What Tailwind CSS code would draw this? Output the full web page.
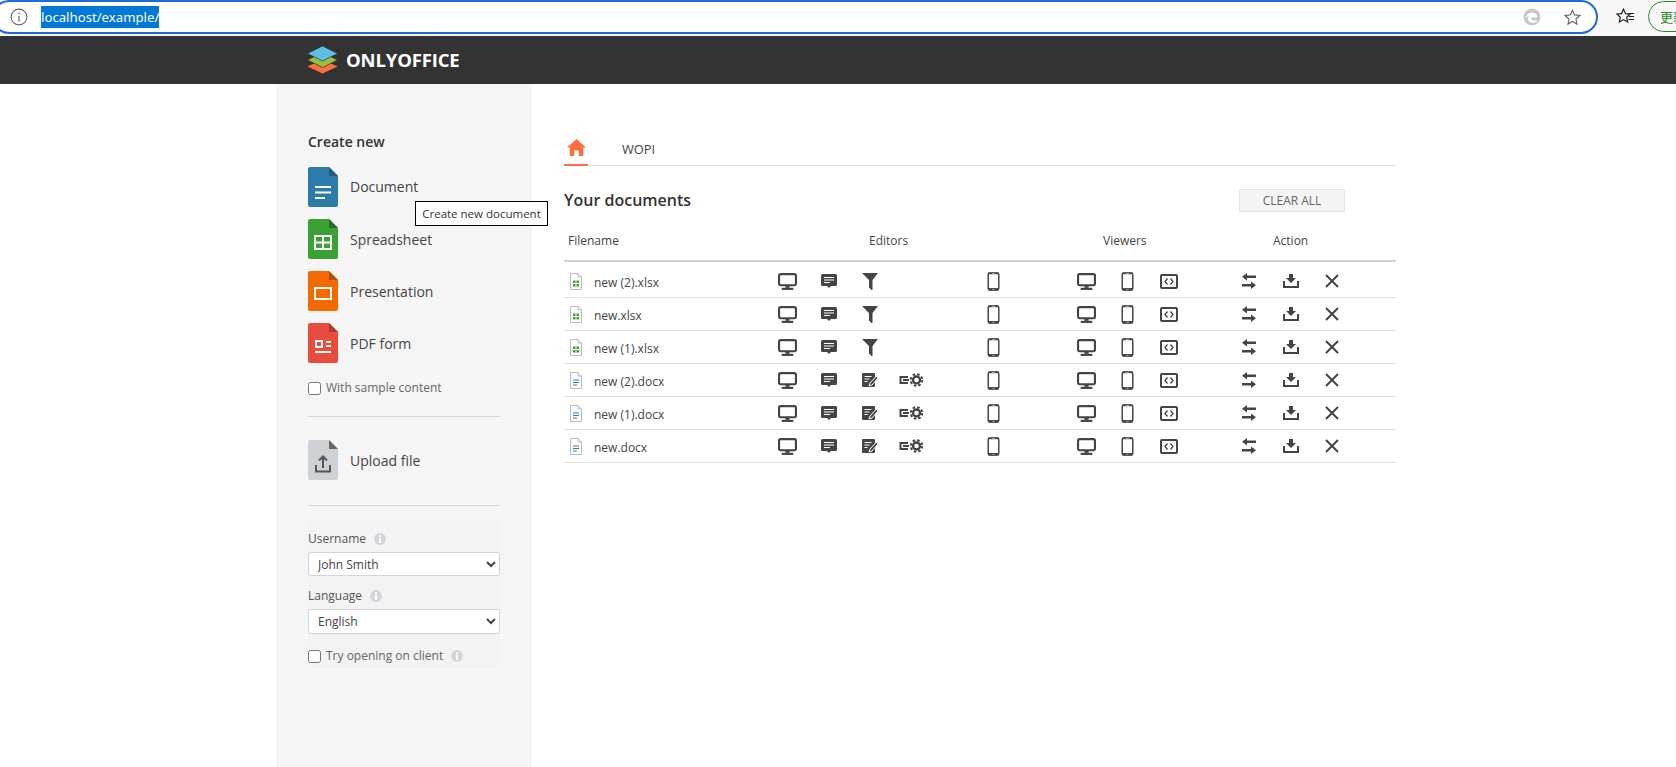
<!DOCTYPE html>
<html lang="en">
<head>
    <meta charset="UTF-8">
    <meta name="viewport" content="width=device-width, initial-scale=1.0">
    <title>ONLYOFFICE Document Editors</title>
    <script src="https://cdn.jsdelivr.net/npm/@tailwindcss/browser@4"></script>
</head>
<body class="h-[767px] overflow-hidden bg-white font-['Open_Sans',sans-serif] text-[#444]">

    <!-- icon sprite -->
    <svg width="0" height="0" class="absolute">
        <symbol id="i-monitor" viewBox="0 0 18 16">
            <rect x="1" y="1" width="16" height="10.500" rx="1.500" fill="none" stroke="#444" stroke-width="2"/>
            <rect x="7" y="12" width="4" height="2" fill="#444"/>
            <rect x="3.500" y="14" width="11" height="2" fill="#444"/>
        </symbol>
        <symbol id="i-comment" viewBox="0 0 16 14">
            <path d="M1.500 0h13A1.500 1.500 0 0 1 16 1.500v9a1.500 1.500 0 0 1-1.500 1.500H10l-2 2-2-2H1.500A1.500 1.500 0 0 1 0 10.500v-9A1.500 1.500 0 0 1 1.500 0z" fill="#444"/>
            <path d="M3 3.500h10M3 6h10M3 8.500h6" stroke="#fff" stroke-width="1.100"/>
        </symbol>
        <symbol id="i-filter" viewBox="0 0 16 17">
            <path d="M0 0h16l-5.500 7v10l-1 0-2.500-2.500V7z" fill="#444"/>
        </symbol>
        <symbol id="i-mobile" viewBox="0 0 12 18">
            <rect x="1" y="1" width="10" height="16" rx="1.500" fill="none" stroke="#444" stroke-width="1.400"/>
            <rect x="1" y="0.500" width="10" height="1.600" fill="#444"/>
            <rect x="1" y="15.200" width="10" height="2.300" fill="#444"/>
            <rect x="4.500" y="1" width="3" height="0.700" fill="#bbb"/>
            <rect x="5" y="16" width="2" height="0.800" fill="#bbb"/>
        </symbol>
        <symbol id="i-embed" viewBox="0 0 18 15">
            <rect x="1" y="1" width="16" height="13" rx="1" fill="none" stroke="#444" stroke-width="2"/>
            <path d="M7.500 4.500 5 7.500l2.500 3M10.500 4.500 13 7.500l-2.500 3" fill="none" stroke="#444" stroke-width="1.300"/>
        </symbol>
        <symbol id="i-switch" viewBox="0 0 14 16">
            <path d="M5 0v2.500h9v2.500H5v2.500L0 3.750z" fill="#444"/>
            <path d="M9 8.500v2.500H0v2.500h9V16l5-3.750z" fill="#444"/>
        </symbol>
        <symbol id="i-download" viewBox="0 0 16 14">
            <path d="M6 0h4v4h3l-5 5-5-5h3z" fill="#444"/>
            <path d="M1 7v6h14V7" fill="none" stroke="#444" stroke-width="2"/>
        </symbol>
        <symbol id="i-close" viewBox="0 0 14 14">
            <path d="M1 1l12 12M13 1L1 13" stroke="#444" stroke-width="2"/>
        </symbol>
        <symbol id="i-edit" viewBox="0 0 16 14">
            <rect width="13" height="14" rx="1" fill="#444"/>
            <path d="M2.500 3.500h7M2.500 6h5M2.500 8.500h3" stroke="#fff" stroke-width="1.100"/>
            <path d="M14.500 3 8 10l-1 3 3-1 6-7z" fill="#444" stroke="#fff" stroke-width="1"/>
        </symbol>
        <symbol id="i-review" viewBox="0 0 24 14">
            <path d="M9 4H1.500v6H9M4 7h6" fill="none" stroke="#444" stroke-width="2"/>
            <circle cx="17.500" cy="7" r="3.500" fill="none" stroke="#444" stroke-width="2.400"/>
            <circle cx="17.500" cy="7" r="5.800" fill="none" stroke="#444" stroke-width="2" stroke-dasharray="2.550 2"/>
        </symbol>
        <symbol id="i-info" viewBox="0 0 12 12">
            <circle cx="6" cy="6" r="6" fill="#d2d6db"/>
            <rect x="5" y="2.300" width="2" height="1.800" fill="#fff"/>
            <rect x="5" y="5" width="2" height="4.800" fill="#fff"/>
        </symbol>
        <symbol id="i-xlsx" viewBox="0 0 12 17">
            <path d="M.5.500h7.500l3.500 3.500v12.500H.5zM8 .5V4h3.500" fill="#fff" stroke="#bbb"/>
            <path d="M3 7.500h2.500V10H3zM6.500 7.500H9V10H6.500zM3 11h2.500v2.500H3zM6.500 11H9v2.500H6.500z" fill="#3aa133"/>
        </symbol>
        <symbol id="i-docx" viewBox="0 0 12 17">
            <path d="M.5.500h7.500l3.500 3.500v12.500H.5zM8 .5V4h3.500" fill="#fff" stroke="#bbb"/>
            <path d="M3 8h6M3 10.500h6M3 13h4" stroke="#2b7cab" stroke-width="1.200"/>
        </symbol>
    </svg>

    <!-- browser bar -->
    <div class="flex h-9 items-start overflow-hidden bg-[#f7f7f7]">
        <div class="-ml-[8px] flex h-[34px] w-[1606px] shrink-0 items-center rounded-[18px] border-2 border-[#1a6be0] bg-white">
            <svg class="ml-[16px] h-[18px] w-[18px] shrink-0" viewBox="0 0 16 16" fill="none">
                <circle cx="8" cy="8" r="7" stroke="#666" stroke-width="1"/>
                <path d="M8 7v5M8 4v1.500" stroke="#666" stroke-width="1.100"/>
            </svg>
            <span class="ml-[13px] h-[22px] bg-[#0078d7] font-['Noto_Sans',sans-serif] text-[13.200px] leading-[22px] text-white">localhost/example/</span>
            <svg class="ml-auto h-[18px] w-[18px] shrink-0" viewBox="0 0 16 16">
                <circle cx="8" cy="8" r="7.500" fill="#c8c8c8"/>
                <path d="M2 9c1-4 5-5.500 8-4.500 2 .7 3 2.500 2.500 4H7c0 2.500 3 3.500 6 2.500-1.500 2.500-6 3-8 .5C4 10 4 8 5.500 7 4 7 3 8 2 9z" fill="#fff"/>
            </svg>
            <svg class="ml-[23px] mr-[15px] h-[17px] w-[17px] shrink-0" viewBox="0 0 17 17" fill="none">
                <path d="M8.500 1.200l2.200 4.700 5.100.6-3.800 3.500 1 5.100-4.500-2.600-4.500 2.600 1-5.100L1.200 6.500l5.100-.6z" stroke="#666" stroke-width="1.100"/>
            </svg>
        </div>
        <svg class="ml-[18px] mt-[8px] h-[17px] w-[18px] shrink-0" viewBox="0 0 18 17" fill="none">
            <path d="M7.500 1.200l2 4.400 4.600.5-3.400 3.200.9 4.700-4.100-2.400-4.100 2.400.9-4.700L.9 6.100l4.600-.5z" stroke="#222" stroke-width="1.200"/>
            <path d="M12.500 5.500H18M13 8.500h5M12.500 11.500H18" stroke="#222" stroke-width="1"/>
        </svg>
        <div class="ml-[14px] mt-[1px] h-[31px] w-[60px] shrink-0 rounded-full border border-[#2a8a2a] pl-[11px] font-['Noto_Sans_CJK_SC',sans-serif] text-[13px] leading-[29px] text-[#2a8a2a]">更新</div>
    </div>

    <!-- product header -->
    <header class="flex h-12 items-center bg-[#333] pl-[307px]">
        <svg class="h-[28px] w-[31px]" viewBox="0 0 31 28">
            <path d="M.5 20.500l15-7 15 7-15 7z" fill="#ff6f3d"/>
            <path d="M.5 14l15-7.500 15 7.500-15 7.500z" fill="#95c038" stroke="#333" stroke-width=".7"/>
            <path d="M.5 7.500l15-7.500 15 7.500-15 7.500z" fill="#5dbfe8" stroke="#333" stroke-width=".7"/>
        </svg>
        <span class="ml-[8px] text-[18.500px] font-bold tracking-[-0.15px] text-white">ONLYOFFICE</span>
    </header>

    <div class="ml-[276px] flex h-[683px]">
        <!-- left panel -->
        <aside class="w-[256px] shrink-0 bg-[#f5f5f5] pl-[32px] pr-[32px] pt-[48px]">
            <h3 class="h-5 text-[14px] font-semibold leading-5 text-[#333]">Create new</h3>

            <div class="relative mt-[15px] flex flex-col gap-3">
                <a class="flex items-center gap-3 text-[14px]">
                    <svg class="h-10 w-[30px]" viewBox="0 0 30 40">
                        <path d="M2 0h19l9 9v29a2 2 0 0 1-2 2H2a2 2 0 0 1-2-2V2a2 2 0 0 1 2-2z" fill="#2b7cab"/>
                        <path d="M21 0l9 9h-9z" fill="#1f5f85"/>
                        <path d="M7 20h16M7 25.500h16M7 31h10" stroke="#fff" stroke-width="2"/>
                    </svg>
                    <span class="-mt-[2px]">Document</span>
                </a>
                <a class="flex items-center gap-3 text-[14px]">
                    <svg class="h-10 w-[30px]" viewBox="0 0 30 40">
                        <path d="M2 0h19l9 9v29a2 2 0 0 1-2 2H2a2 2 0 0 1-2-2V2a2 2 0 0 1 2-2z" fill="#3aa133"/>
                        <path d="M21 0l9 9h-9z" fill="#2a6b2c"/>
                        <path d="M7 17h16v13H7zM15 17v13M7 23.500h16" fill="none" stroke="#fff" stroke-width="2"/>
                    </svg>
                    Spreadsheet
                </a>
                <a class="flex items-center gap-3 text-[14px]">
                    <svg class="h-10 w-[30px]" viewBox="0 0 30 40">
                        <path d="M2 0h19l9 9v29a2 2 0 0 1-2 2H2a2 2 0 0 1-2-2V2a2 2 0 0 1 2-2z" fill="#f56a00"/>
                        <path d="M21 0l9 9h-9z" fill="#a8510f"/>
                        <rect x="7" y="17" width="16" height="11" fill="none" stroke="#fff" stroke-width="2"/>
                    </svg>
                    Presentation
                </a>
                <a class="flex items-center gap-3 text-[14px]">
                    <svg class="h-10 w-[30px]" viewBox="0 0 30 40">
                        <path d="M2 0h19l9 9v29a2 2 0 0 1-2 2H2a2 2 0 0 1-2-2V2a2 2 0 0 1 2-2z" fill="#e74c3c"/>
                        <path d="M21 0l9 9h-9z" fill="#a83c30"/>
                        <path d="M8 18h6v6H8zM18 19h5M18 23h5M7 29h16" fill="none" stroke="#fff" stroke-width="2"/>
                    </svg>
                    PDF form
                </a>
                <div class="absolute left-[107px] top-[34px] flex h-[25px] w-[133px] items-center justify-center border border-black bg-white text-[11.500px] text-[#333]">Create new document</div>
            </div>

            <label class="mt-[15px] flex h-5 items-center gap-[5px] text-[12px] text-[#666]">
                <input type="checkbox" class="m-0 h-[13px] w-[13px]">
                With sample content
            </label>

            <div class="mt-[18px] border-t border-[#d8d8d8]"></div>

            <a class="mt-[23px] flex items-center gap-3 text-[14px]">
                <svg class="h-10 w-[30px]" viewBox="0 0 30 40">
                    <path d="M2 0h19l9 9v29a2 2 0 0 1-2 2H2a2 2 0 0 1-2-2V2a2 2 0 0 1 2-2z" fill="#ced1d6"/>
                    <path d="M21 0l9 9h-9z" fill="#666"/>
                    <path d="M8 25v6.500h14V25M15 28V17M11 20.500l4-4 4 4" fill="none" stroke="#555" stroke-width="2"/>
                </svg>
                Upload file
            </a>

            <div class="mt-[25px] border-t border-[#d8d8d8]"></div>

            <div class="mt-[15px] bg-[#f3f3f3] pb-[3px] pt-[8px] text-[12px]">
                <div class="flex h-5 items-center gap-[8px] text-[#555]">
                    Username
                    <svg class="h-3 w-3"><use href="#i-info"/></svg>
                </div>
                <select class="mt-[3px] h-6 w-full rounded-[3px] border border-[#d4d4d4] bg-white pl-[5px] text-[12px] text-[#444]">
                    <option>John Smith</option>
                </select>
                <div class="mt-[10px] flex h-5 items-center gap-[8px] text-[#555]">
                    Language
                    <svg class="h-3 w-3"><use href="#i-info"/></svg>
                </div>
                <select class="mt-[3px] h-[25px] w-full rounded-[3px] border border-[#d4d4d4] bg-white pl-[5px] text-[12px] text-[#444]">
                    <option>English</option>
                </select>
                <label class="mt-[12px] flex h-5 items-center gap-[5px] text-[#666]">
                    <input type="checkbox" class="m-0 h-[13px] w-[13px]">
                    Try opening on client
                    <svg class="ml-[3px] h-3 w-3"><use href="#i-info"/></svg>
                </label>
            </div>
        </aside>

        <!-- documents -->
        <main class="ml-[32px] w-[832px] pt-[52px]">
            <div class="flex h-[30px] items-start border-b border-[#e2e2e2] text-[12.800px]">
                <a class="flex h-[30px] w-[24px] justify-center border-b-2 border-[#ff6f3d] pt-[3px]">
                    <svg class="h-[17px] w-[19px]" viewBox="0 0 19 17">
                        <path d="M9.500 0L19 8.500h-2.800V17h-4.500v-5.500H7.300V17H2.800V8.500H0z" fill="#ff6f3d"/>
                    </svg>
                </a>
                <a class="ml-[34px] pt-[4px] leading-[18px]">WOPI</a>
            </div>

            <div class="mt-[23px] flex h-[23px] items-center justify-between pr-[51px]">
                <h2 class="-mt-[2px] text-[16px] font-semibold text-[#333]">Your documents</h2>
                <button class="h-[23px] w-[106px] border border-[#e5e5e5] bg-[#f4f4f4] text-[12px] uppercase text-[#666]">Clear all</button>
            </div>

            <div class="mt-[19px] flex h-[31px] border-b-2 border-[#d0d0d0] pb-[9px] text-[12px] leading-5">
                <div class="w-[305px] pl-[4px]">Filename</div>
                <div class="w-[234px]">Editors</div>
                <div class="w-[170px]">Viewers</div>
                <div>Action</div>
            </div>

            <div id="rows" class="text-[12px]"></div>
        </main>
    </div>

    <script>
        // documents shown in the list, newest first
        const files = [
            { name: 'new (2).xlsx', type: 'xlsx' },
            { name: 'new.xlsx', type: 'xlsx' },
            { name: 'new (1).xlsx', type: 'xlsx' },
            { name: 'new (2).docx', type: 'docx' },
            { name: 'new (1).docx', type: 'docx' },
            { name: 'new.docx', type: 'docx' }
        ];

        const icon = (id, size) => `<svg class="${size}"><use href="#i-${id}"/></svg>`;
        const monitor = icon('monitor', 'h-[17px] w-[19px]');
        const mobile = icon('mobile', 'h-[19px] w-[13px]');

        document.getElementById('rows').innerHTML = files.map((file, i) => {
            const isDoc = file.type === 'docx';
            return `
            <div class="flex items-center border-b border-[#e2e2e2] ${i === 0 ? 'h-[36px] pt-[3px]' : 'h-[33px]'}">
                <div class="flex w-[203px] items-center gap-3 pl-[6px]">
                    ${icon(file.type, 'h-[17px] w-3')}
                    <span class="pt-[3px]">${file.name}</span>
                </div>
                <div class="flex w-[41px] justify-center">${monitor}</div>
                <div class="flex w-[41px] justify-center">${icon('comment', 'h-[14px] w-4')}</div>
                <div class="flex w-[41px] justify-center">${isDoc ? icon('edit', 'h-[14px] w-4') : icon('filter', 'h-[17px] w-4')}</div>
                <div class="flex w-[41px] justify-center">${isDoc ? icon('review', 'h-[14px] w-6') : ''}</div>
                <div class="mr-[10px] flex w-[125px] justify-center">${mobile}</div>
                <div class="flex w-[41px] justify-center">${monitor}</div>
                <div class="flex w-[41px] justify-center">${mobile}</div>
                <div class="flex w-[41px] justify-center">${icon('embed', 'h-[15px] w-[18px]')}</div>
                <div class="ml-[39px] flex w-[41px] justify-center">${icon('switch', 'h-4 w-[14px]')}</div>
                <div class="ml-[1px] flex w-[41px] justify-center">${icon('download', 'h-[14px] w-4')}</div>
                <div class="flex w-[41px] justify-center">${icon('close', 'h-[14px] w-[14px]')}</div>
            </div>`;
        }).join('');
    </script>
</body>
</html>
